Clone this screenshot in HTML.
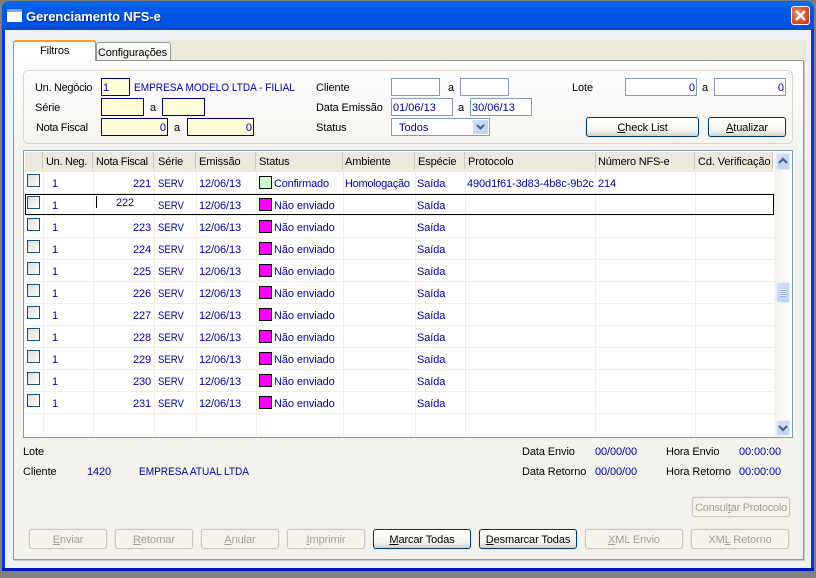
<!DOCTYPE html>
<html><head><meta charset="utf-8"><style>
html,body{margin:0;padding:0;background:#808080}
#w{position:relative;width:816px;height:578px;overflow:hidden;background:#808080;font:11px/13px "Liberation Sans",sans-serif;color:#000;letter-spacing:-.1px}
#w div,#w span{position:absolute;box-sizing:border-box}
.t{white-space:nowrap}
.b{color:#0000a8}
.r{text-align:right}
.cap{letter-spacing:0;transform:scaleX(.915);transform-origin:0 50%}
.sv{letter-spacing:0;transform:scaleX(.87);transform-origin:0 50%}
.i{background:#fffbd6;border:1px solid #000080;height:18px;color:#0000a8;line-height:18px;padding:0 1px;text-align:right;letter-spacing:0}
.n{background:#fff;border:1px solid #7f9db9;height:18px;color:#0000a8;line-height:18px;padding:0 1px;letter-spacing:0}
.c{top:0;width:1px;height:265px;background:#f1efe2}
.h{top:152px;height:17px;width:1px;background:#cbc7b8}
.l{width:750px;height:1px;background:#f1efe2}
.k{left:27px;width:13px;height:13px;border:1px solid #1c5180;background:linear-gradient(135deg,#dcdcd7,#fff)}
.s{left:259px;width:13px;height:13px;border:1px solid #000;background:#f0f}
.btn{border:1px solid #003c74;border-radius:3px;background:linear-gradient(#fff,#f4f3ee 70%,#d6d0c5);text-align:center;line-height:20px;box-shadow:0 0 0 1px #ece9d8;white-space:nowrap}
.d{border:1px solid #c9c7ba;border-radius:3px;background:#f3f2ec;color:#a1a192;text-align:center;height:20px;line-height:20px;top:529px;box-shadow:0 0 0 1px #eceadd;white-space:nowrap}
.sb{border-radius:2px;background:linear-gradient(135deg,#d3dffb,#bfd0f8);border:1px solid #e6edfd;outline:0}
u{text-decoration:underline}
</style></head><body><div id="w">
<div style="left:2px;top:2px;width:812px;height:569px;background:#0a34e8;border-bottom:3px solid #0018c0;border-radius:6px 6px 0 0"></div>
<div style="left:2px;top:1px;width:812px;height:30px;border-radius:7px 7px 0 0;background:linear-gradient(#0a5fe0,#0a6af0 8%,#0058e6 30%,#0055e5 55%,#0252e0 85%,#0049c8)"></div>
<div style="left:5px;top:30px;width:806px;height:538px;background:#eff1f9"></div>
<div style="left:7px;top:9px;width:15px;height:13px;background:#fff;border-top:3px solid #7aa8f0;border-radius:1px"></div>
<span class="t" style="left:26px;top:9px;color:#fff;font-weight:bold;font-size:13px;line-height:16px;letter-spacing:-.05px;text-shadow:1px 1px 0 #0a2a90">Gerenciamento NFS-e</span>
<div style="left:791px;top:6px;width:19px;height:19px;border:1px solid #fff;border-radius:3px;background:radial-gradient(circle at 35% 35%,#e98a6c,#d5411c 70%,#c5381a)"></div>
<svg style="position:absolute;left:791px;top:6px" width="19" height="19"><path d="M5 5L14 14M14 5L5 14" stroke="#fff" stroke-width="2.4"/></svg>

<div style="left:13px;top:40px;width:793px;height:21px;background:#ece9d8"></div>
<div style="left:13px;top:60px;width:791px;height:500px;border:1px solid #919b9c;box-shadow:1px 1px 0 #c8c7bc;background:linear-gradient(#fff,#f3f2ec 20%,#f3f2ec)"></div>
<div style="left:96px;top:42px;width:75px;height:19px;background:linear-gradient(#fff,#f2f1ea);border:1px solid #919b9c;border-radius:3px 3px 0 0"></div>
<span class="t" style="left:98px;top:47px;letter-spacing:-.15px">Configurações</span>
<div style="left:13px;top:40px;width:83px;height:21px;background:#fff;border:1px solid #919b9c;border-bottom:0;border-top:2px solid #ff9f1c;border-radius:3px 3px 0 0"></div>
<span class="t" style="left:40px;top:45px">Filtros</span>

<div style="left:23px;top:70px;width:770px;height:74px;border:1px solid #d8d6c8;border-radius:5px;background:linear-gradient(#fdfdfe,#f5f4f0)"></div>
<span class="t" style="left:35px;top:82px;letter-spacing:-.3px">Un. Negócio</span>
<span class="t" style="left:35px;top:102px">Série</span>
<span class="t" style="left:36px;top:122px;letter-spacing:-.3px">Nota Fiscal</span>
<div class="i" style="left:101px;top:78px;width:29px;text-align:left">1</div>
<span class="t b cap" style="left:134px;top:82px">EMPRESA MODELO LTDA - FILIAL</span>
<div class="i" style="left:101px;top:98px;width:43px"></div>
<span class="t" style="left:150px;top:102px">a</span>
<div class="i" style="left:162px;top:98px;width:43px"></div>
<div class="i" style="left:101px;top:118px;width:67px">0</div>
<span class="t" style="left:174px;top:122px">a</span>
<div class="i" style="left:187px;top:118px;width:67px">0</div>

<span class="t" style="left:316px;top:82px">Cliente</span>
<span class="t" style="left:316px;top:102px;letter-spacing:-.15px">Data Emissão</span>
<span class="t" style="left:316px;top:122px">Status</span>
<div class="n" style="left:391px;top:78px;width:49px"></div>
<span class="t" style="left:448px;top:82px">a</span>
<div class="n" style="left:460px;top:78px;width:49px"></div>
<div class="n" style="left:391px;top:98px;width:62px">01/06/13</div>
<span class="t" style="left:458px;top:102px">a</span>
<div class="n" style="left:470px;top:98px;width:62px">30/06/13</div>
<div class="n" style="left:391px;top:118px;width:99px;padding-left:7px;line-height:19px">Todos</div>
<div style="left:473px;top:120px;width:15px;height:14px;border-radius:1px;background:linear-gradient(135deg,#d3dffb,#bfd0f8)"></div>
<svg style="position:absolute;left:473px;top:120px" width="15" height="14"><path d="M4 5L7.5 8.5L11 5" fill="none" stroke="#4d6185" stroke-width="2"/></svg>

<span class="t" style="left:572px;top:82px">Lote</span>
<div class="n r" style="left:625px;top:78px;width:72px">0</div>
<span class="t" style="left:702px;top:82px">a</span>
<div class="n r" style="left:714px;top:78px;width:72px">0</div>
<div class="btn" style="left:586px;top:117px;width:113px;height:20px"><u>C</u>heck List</div>
<div class="btn" style="left:708px;top:117px;width:78px;height:20px"><u>A</u>tualizar</div>

<!-- grid -->
<div style="left:23px;top:150px;width:770px;height:288px;border:1px solid #7f9db9;background:#fff"></div>
<div style="left:25px;top:152px;width:748px;height:20px;background:#ebe9dc"></div>
<div class="h" style="left:42px"></div><div class="h" style="left:92px"></div><div class="h" style="left:153px"></div><div class="h" style="left:195px"></div><div class="h" style="left:255px"></div><div class="h" style="left:342px"></div><div class="h" style="left:414px"></div><div class="h" style="left:464px"></div><div class="h" style="left:595px"></div><div class="h" style="left:694px"></div><div class="h" style="left:772px"></div>
<span class="t" style="left:46px;top:156px;letter-spacing:-.3px">Un. Neg.</span>
<span class="t" style="left:96px;top:156px;letter-spacing:-.3px">Nota Fiscal</span>
<span class="t" style="left:158px;top:156px">Série</span>
<span class="t" style="left:199px;top:156px">Emissão</span>
<span class="t" style="left:259px;top:156px">Status</span>
<span class="t" style="left:345px;top:156px">Ambiente</span>
<span class="t" style="left:418px;top:156px">Espécie</span>
<span class="t" style="left:468px;top:156px">Protocolo</span>
<span class="t" style="left:598px;top:156px;letter-spacing:-.2px">Número NFS-e</span>
<span class="t" style="left:698px;top:156px">Cd. Verificação</span>

<div style="left:0;top:172px;width:816px;height:265px">
<div class="c" style="left:43px"></div><div class="c" style="left:93px"></div><div class="c" style="left:154px"></div><div class="c" style="left:196px"></div><div class="c" style="left:256px"></div><div class="c" style="left:343px"></div><div class="c" style="left:415px"></div><div class="c" style="left:465px"></div><div class="c" style="left:595px"></div><div class="c" style="left:695px"></div>
</div>
<div class="l" style="left:25px;top:193px"></div><div class="l" style="left:25px;top:215px"></div><div class="l" style="left:25px;top:237px"></div><div class="l" style="left:25px;top:259px"></div><div class="l" style="left:25px;top:281px"></div><div class="l" style="left:25px;top:303px"></div><div class="l" style="left:25px;top:325px"></div><div class="l" style="left:25px;top:347px"></div><div class="l" style="left:25px;top:369px"></div><div class="l" style="left:25px;top:391px"></div><div class="l" style="left:25px;top:413px"></div>

<div style="left:25px;top:194px;width:749px;height:21px;border:1px solid #000"></div>
<div style="left:96px;top:196px;width:1px;height:12px;background:#000"></div>

<div class="k" style="top:174px"></div><div class="k" style="top:196px"></div><div class="k" style="top:218px"></div><div class="k" style="top:240px"></div><div class="k" style="top:262px"></div><div class="k" style="top:284px"></div><div class="k" style="top:306px"></div><div class="k" style="top:328px"></div><div class="k" style="top:350px"></div><div class="k" style="top:372px"></div><div class="k" style="top:394px"></div>

<div class="s" style="top:176px;background:#ccffcc"></div><div class="s" style="top:198px"></div><div class="s" style="top:220px"></div><div class="s" style="top:242px"></div><div class="s" style="top:264px"></div><div class="s" style="top:286px"></div><div class="s" style="top:308px"></div><div class="s" style="top:330px"></div><div class="s" style="top:352px"></div><div class="s" style="top:374px"></div><div class="s" style="top:396px"></div>

<div class="b" style="left:0;top:0;width:816px;height:578px">
<span class="t" style="left:52px;top:178px">1</span><span class="t r" style="left:100px;width:51px;top:178px">221</span><span class="t sv" style="left:158px;top:178px">SERV</span><span class="t" style="left:199px;top:178px">12/06/13</span><span class="t" style="left:274px;top:178px;letter-spacing:-.2px">Confirmado</span><span class="t" style="left:345px;top:178px;letter-spacing:-.3px">Homologação</span><span class="t" style="left:417px;top:178px">Saída</span><span class="t" style="left:467px;top:178px;width:127px;overflow:hidden">490d1f61-3d83-4b8c-9b2c</span><span class="t" style="left:598px;top:178px">214</span>
<span class="t" style="left:52px;top:200px">1</span><span class="t" style="left:116px;top:197px">222</span><span class="t sv" style="left:158px;top:200px">SERV</span><span class="t" style="left:199px;top:200px">12/06/13</span><span class="t" style="left:274px;top:200px">Não enviado</span><span class="t" style="left:417px;top:200px">Saída</span>
<span class="t" style="left:52px;top:222px">1</span><span class="t r" style="left:100px;width:51px;top:222px">223</span><span class="t sv" style="left:158px;top:222px">SERV</span><span class="t" style="left:199px;top:222px">12/06/13</span><span class="t" style="left:274px;top:222px">Não enviado</span><span class="t" style="left:417px;top:222px">Saída</span>
<span class="t" style="left:52px;top:244px">1</span><span class="t r" style="left:100px;width:51px;top:244px">224</span><span class="t sv" style="left:158px;top:244px">SERV</span><span class="t" style="left:199px;top:244px">12/06/13</span><span class="t" style="left:274px;top:244px">Não enviado</span><span class="t" style="left:417px;top:244px">Saída</span>
<span class="t" style="left:52px;top:266px">1</span><span class="t r" style="left:100px;width:51px;top:266px">225</span><span class="t sv" style="left:158px;top:266px">SERV</span><span class="t" style="left:199px;top:266px">12/06/13</span><span class="t" style="left:274px;top:266px">Não enviado</span><span class="t" style="left:417px;top:266px">Saída</span>
<span class="t" style="left:52px;top:288px">1</span><span class="t r" style="left:100px;width:51px;top:288px">226</span><span class="t sv" style="left:158px;top:288px">SERV</span><span class="t" style="left:199px;top:288px">12/06/13</span><span class="t" style="left:274px;top:288px">Não enviado</span><span class="t" style="left:417px;top:288px">Saída</span>
<span class="t" style="left:52px;top:310px">1</span><span class="t r" style="left:100px;width:51px;top:310px">227</span><span class="t sv" style="left:158px;top:310px">SERV</span><span class="t" style="left:199px;top:310px">12/06/13</span><span class="t" style="left:274px;top:310px">Não enviado</span><span class="t" style="left:417px;top:310px">Saída</span>
<span class="t" style="left:52px;top:332px">1</span><span class="t r" style="left:100px;width:51px;top:332px">228</span><span class="t sv" style="left:158px;top:332px">SERV</span><span class="t" style="left:199px;top:332px">12/06/13</span><span class="t" style="left:274px;top:332px">Não enviado</span><span class="t" style="left:417px;top:332px">Saída</span>
<span class="t" style="left:52px;top:354px">1</span><span class="t r" style="left:100px;width:51px;top:354px">229</span><span class="t sv" style="left:158px;top:354px">SERV</span><span class="t" style="left:199px;top:354px">12/06/13</span><span class="t" style="left:274px;top:354px">Não enviado</span><span class="t" style="left:417px;top:354px">Saída</span>
<span class="t" style="left:52px;top:376px">1</span><span class="t r" style="left:100px;width:51px;top:376px">230</span><span class="t sv" style="left:158px;top:376px">SERV</span><span class="t" style="left:199px;top:376px">12/06/13</span><span class="t" style="left:274px;top:376px">Não enviado</span><span class="t" style="left:417px;top:376px">Saída</span>
<span class="t" style="left:52px;top:398px">1</span><span class="t r" style="left:100px;width:51px;top:398px">231</span><span class="t sv" style="left:158px;top:398px">SERV</span><span class="t" style="left:199px;top:398px">12/06/13</span><span class="t" style="left:274px;top:398px">Não enviado</span><span class="t" style="left:417px;top:398px">Saída</span>
</div>

<!-- scrollbar -->
<div style="left:774px;top:152px;width:18px;height:285px;background:linear-gradient(90deg,#f3f1ec,#fefefe)"></div>
<div class="sb" style="left:776px;top:153px;width:14px;height:17px"></div>
<svg style="position:absolute;left:776px;top:153px" width="14" height="17"><path d="M3 10L7 6L11 10" fill="none" stroke="#4d6185" stroke-width="2.2"/></svg>
<div class="sb" style="left:776px;top:282px;width:14px;height:21px"></div>
<svg style="position:absolute;left:776px;top:282px" width="14" height="21"><path d="M4 7.5H10M4 9.5H10M4 11.5H10M4 13.5H10" stroke="#eef3fd" stroke-width="1"/><path d="M4 8.5H10M4 10.5H10M4 12.5H10M4 14.5H10" stroke="#8fa8e0" stroke-width="1"/></svg>
<div class="sb" style="left:776px;top:420px;width:14px;height:16px"></div>
<svg style="position:absolute;left:776px;top:420px" width="14" height="16"><path d="M3 6L7 10L11 6" fill="none" stroke="#4d6185" stroke-width="2.2"/></svg>

<!-- info -->
<span class="t" style="left:23px;top:446px">Lote</span>
<span class="t" style="left:23px;top:466px">Cliente</span>
<span class="t b" style="left:87px;top:466px">1420</span>
<span class="t b cap" style="left:139px;top:466px">EMPRESA ATUAL LTDA</span>
<span class="t" style="left:522px;top:446px">Data Envio</span>
<span class="t b" style="left:595px;top:446px">00/00/00</span>
<span class="t" style="left:666px;top:446px">Hora Envio</span>
<span class="t b" style="left:739px;top:446px">00:00:00</span>
<span class="t" style="left:522px;top:466px">Data Retorno</span>
<span class="t b" style="left:595px;top:466px">00/00/00</span>
<span class="t" style="left:666px;top:466px">Hora Retorno</span>
<span class="t b" style="left:739px;top:466px">00:00:00</span>

<div class="d" style="left:692px;top:497px;width:98px;letter-spacing:-.25px">Consul<u>t</u>ar Protocolo</div>
<div class="d" style="left:29px;width:78px"><u>E</u>nviar</div>
<div class="d" style="left:115px;width:78px"><u>R</u>etornar</div>
<div class="d" style="left:201px;width:78px"><u>A</u>nular</div>
<div class="d" style="left:287px;width:78px"><u>I</u>mprimir</div>
<div class="btn" style="left:373px;top:529px;width:98px;height:20px"><u>M</u>arcar Todas</div>
<div class="btn" style="left:479px;top:529px;width:98px;height:20px"><u>D</u>esmarcar Todas</div>
<div class="d" style="left:585px;width:98px"><u>X</u>ML Envio</div>
<div class="d" style="left:691px;width:98px">XM<u>L</u> Retorno</div>
</div></body></html>
